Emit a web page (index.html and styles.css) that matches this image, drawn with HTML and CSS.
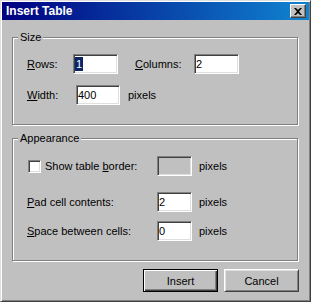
FILE: index.html
```html
<!doctype html>
<html>
<head>
  <link rel="stylesheet" href="styles.css">
</head>
<body>
  <div class="dialog">
    <div class="titlebar">
      <span class="title">Insert Table</span>
      <div class="closeBtn">
        <svg width="8" height="7" viewBox="0 0 8 7">
          <path d="M0 0h2l2 2 2-2h2L5 3.5 8 7H6L4 5 2 7H0l3-3.5z" fill="#000"/>
        </svg>
      </div>
    </div>

    <div class="body">
      <fieldset class="group">
        <legend>Size</legend>
        <div class="row">
          <span class="lbl rowsLbl"><u>R</u>ows:</span>
          <div class="field wide"><span class="sel">1</span></div>
          <span class="lbl colsLbl"><u>C</u>olumns:</span>
          <div class="field wide">2</div>
        </div>
        <div class="row second">
          <span class="lbl widthLbl"><u>W</u>idth:</span>
          <div class="field narrowWide">400</div>
          <span class="unit">pixels</span>
        </div>
      </fieldset>

      <fieldset class="group appearance">
        <legend>Appearance</legend>
        <div class="row">
          <div class="check"></div>
          <span class="lbl checkLbl">Show table <u>b</u>order:</span>
          <div class="field small disabled"></div>
          <span class="unit">pixels</span>
        </div>
        <div class="row padRow">
          <span class="lbl longLbl"><u>P</u>ad cell contents:</span>
          <div class="field small">2</div>
          <span class="unit">pixels</span>
        </div>
        <div class="row spaceRow">
          <span class="lbl longLbl"><u>S</u>pace between cells:</span>
          <div class="field small">0</div>
          <span class="unit">pixels</span>
        </div>
      </fieldset>

      <div class="buttons">
        <button class="btn default">Insert</button>
        <button class="btn">Cancel</button>
      </div>
    </div>
  </div>
</body>
</html>
```

FILE: styles.css
```css
body{
  margin:0;
  font-family:"Liberation Sans", Arial, sans-serif;
  font-size:11px;
  color:#000;
}
.dialog{
  width:311px;
  height:302px;
  box-sizing:border-box;
  background:#c0c0c0;
  border:1px solid;
  border-color:#dfdfdf #404040 #404040 #dfdfdf;
  box-shadow:inset 1px 1px #fff, inset -1px -1px #808080;
  padding:1px;
}
.titlebar{
  height:18px;
  display:flex;
  align-items:center;
  justify-content:space-between;
  padding-left:4px;
  background:linear-gradient(to right, #000080, #1084d0);
}
.title{
  color:#fff;
  font-weight:bold;
  font-size:12px;
}
.closeBtn{
  width:16px;
  height:14px;
  box-sizing:border-box;
  margin-right:3px;
  background:#c0c0c0;
  border:1px solid;
  border-color:#fff #404040 #404040 #fff;
  box-shadow:inset -1px -1px #808080;
  display:flex;
  align-items:center;
  justify-content:center;
}
.closeBtn svg{
  display:block;
  margin-left:-1px;
}
.body{
  padding:11px 11px 0 10px;
}
.group{
  margin:0;
  padding:10px 0 19px 0;
  min-inline-size:0;
  border:1px solid #808080;
  box-shadow:inset 1px 1px #fff, 1px 1px #fff;
}
.group legend{
  margin-left:5px;
  padding:0 2px;
  line-height:13px;
  background:#c0c0c0;
}
.appearance{
  margin-top:7px;
  padding-top:11px;
}
.row{
  display:flex;
  align-items:center;
  height:20px;
  padding-left:14px;
}
.second{
  margin-top:11px;
}
.padRow{
  margin-top:16px;
}
.spaceRow{
  margin-top:9px;
}
.lbl{
  white-space:nowrap;
}
.rowsLbl{ width:46px; }
.colsLbl{ width:59px; margin-left:17px; }
.widthLbl{ width:49px; }
.checkLbl{ width:112px; }
.longLbl{ width:130px; }
.unit{
  margin-left:8px;
}
.field{
  height:20px;
  box-sizing:border-box;
  background:#fff;
  border:1px solid;
  border-color:#808080 #fff #fff #808080;
  box-shadow:inset 1px 1px #404040, inset -1px -1px #dfdfdf;
  padding-left:1px;
  line-height:18px;
  display:flex;
  align-items:center;
}
.wide{ width:45px; }
.narrowWide{ width:44px; }
.small{ width:35px; }
.disabled{ background:#c0c0c0; }
.small + .unit{ margin-left:7px; }
.sel{
  background:#0a246a;
  color:#fff;
  padding:0 1px;
  line-height:14px;
}
.check{
  width:13px;
  height:13px;
  box-sizing:border-box;
  margin-left:1px;
  margin-right:4px;
  background:#fff;
  border:1px solid;
  border-color:#808080 #fff #fff #808080;
  box-shadow:inset 1px 1px #404040, inset -1px -1px #dfdfdf;
}
.buttons{
  display:flex;
  justify-content:flex-end;
  gap:6px;
  margin-top:8px;
  margin-right:-1px;
}
.btn{
  width:75px;
  height:23px;
  box-sizing:border-box;
  margin:0;
  padding:0;
  font-family:"Liberation Sans", Arial, sans-serif;
  font-size:11px;
  color:#000;
  background:#c0c0c0;
  border:1px solid;
  border-color:#fff #404040 #404040 #fff;
  box-shadow:inset 1px 1px #dfdfdf, inset -1px -1px #808080;
}
.btn.default{
  border:1px solid #000;
  box-shadow:inset 1px 1px #fff, inset -1px -1px #404040, inset -2px -2px #808080;
}
```
